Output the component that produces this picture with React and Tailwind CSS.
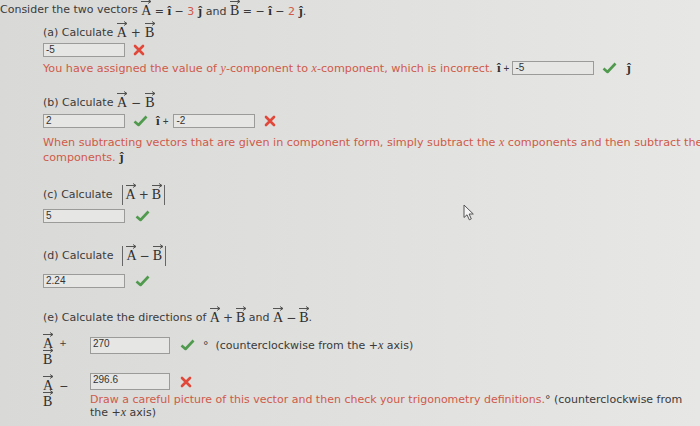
import React from 'react';

const Arrow = () => (
  <svg className="absolute left-[0px] top-[-5px]" width="11" height="5" viewBox="0 0 11 5">
    <path d="M0 2.5 H9.5 M7 0.5 L10 2.5 L7 4.5" stroke="#444" strokeWidth="0.9" fill="none" />
  </svg>
);

const V = ({ c }) => (
  <span className="relative inline-block font-['Liberation_Serif'] text-[14px] leading-none text-[#2e2e2e]">
    {c}
    <Arrow />
  </span>
);

const Hat = ({ c }) => (
  <span className="font-['Liberation_Serif'] font-bold text-[13px] text-[#2e2e2e]">{c}</span>
);

const Check = () => (
  <svg width="15" height="12" viewBox="0 0 15 12" className="shrink-0">
    <path d="M1.5 6.5 L5.5 10 L13.5 1.5" stroke="#4f9a4d" strokeWidth="2.6" fill="none" strokeLinejoin="round" />
  </svg>
);

const Cross = () => (
  <svg width="12" height="12" viewBox="0 0 12 12" className="shrink-0">
    <path d="M2 2 L10 10 M10 2 L2 10" stroke="#e2483a" strokeWidth="2.6" fill="none" strokeLinecap="round" />
  </svg>
);

const Box = ({ v, w = 'w-[82px] h-[14px]' }) => (
  <div className={`${w} border border-[#9b9b99] bg-[#e6e6e4] font-['Liberation_Sans'] text-[10px] leading-[12px] pl-[2px] text-[#333] shrink-0`}>
    {v}
  </div>
);

const Abs = ({ a, op, b }) => (
  <span className="inline-flex items-center h-[20px] border-l border-r border-[#666] px-[3px] ml-[9px]">
    <V c={a} />
    <span className="mx-[3px] text-[12px]">{op}</span>
    <V c={b} />
  </span>
);

export default function App() {
  return (
    <div className="w-[700px] h-[426px] overflow-hidden relative bg-gradient-to-r from-[#d9d9d7] to-[#e7e7e5] text-[#3a3a3a] font-['DejaVu_Sans'] text-[11px]">
      <div className="h-[20px] flex items-center whitespace-nowrap pt-[1px]">
        <span>Consider the two vectors&nbsp;</span>
        <V c="A" />
        <span>&nbsp;= <Hat c="î" /> − <span className="text-[#cf5a4a]">3</span> <Hat c="ĵ" /> and&nbsp;</span>
        <V c="B" />
        <span>&nbsp;= − <Hat c="î" /> − <span className="text-[#cf5a4a]">2</span> <Hat c="ĵ" />.</span>
      </div>

      <div className="pl-[43px]">
        {/* (a) */}
        <div className="mt-[5px] h-[16px] flex items-center whitespace-nowrap">
          <span>(a) Calculate&nbsp;</span>
          <V c="A" />
          <span className="mx-[4px] text-[12px]">+</span>
          <V c="B" />
        </div>
        <div className="mt-[2px] h-[14px] flex items-center gap-[8px]">
          <Box v="-5" />
          <Cross />
        </div>
        <div className="mt-[4px] h-[14px] flex items-center whitespace-nowrap">
          <span className="text-[#cf5a4a] text-[11.2px]">
            You have assigned the value of <i className="font-['Liberation_Serif'] text-[12px]">y</i>-component to <i className="font-['Liberation_Serif'] text-[12px]">x</i>-component, which is incorrect.
          </span>
          <span className="ml-[4px]"><Hat c="î" /></span>
          <span className="mx-[3px] font-['Liberation_Sans'] text-[10px]">+</span>
          <Box v="-5" />
          <span className="ml-[8px]"><Check /></span>
          <span className="ml-[9px]"><Hat c="ĵ" /></span>
        </div>

        {/* (b) */}
        <div className="mt-[20px] h-[16px] flex items-center whitespace-nowrap">
          <span>(b) Calculate&nbsp;</span>
          <V c="A" />
          <span className="mx-[4px] text-[12px]">−</span>
          <V c="B" />
        </div>
        <div className="mt-[3px] h-[14px] flex items-center whitespace-nowrap">
          <Box v="2" />
          <span className="ml-[8px]"><Check /></span>
          <span className="ml-[8px]"><Hat c="î" /></span>
          <span className="ml-[3px] mr-[5px] font-['Liberation_Sans'] text-[10px]">+</span>
          <Box v="-2" />
          <span className="ml-[9px]"><Cross /></span>
        </div>
        <div className="mt-[7px] text-[#cf5a4a] text-[11.2px] leading-[14px] whitespace-nowrap">
          <div>When subtracting vectors that are given in component form, simply subtract the <i className="font-['Liberation_Serif'] text-[12px]">x</i> components and then subtract the <i className="font-['Liberation_Serif'] text-[12px]">y</i></div>
          <div>components. <Hat c="ĵ" /></div>
        </div>

        {/* (c) */}
        <div className="mt-[20px] h-[20px] flex items-center whitespace-nowrap">
          <span>(c) Calculate</span>
          <Abs a="A" op="+" b="B" />
        </div>
        <div className="mt-[4px] h-[14px] flex items-center gap-[10px]">
          <Box v="5" />
          <Check />
        </div>

        {/* (d) */}
        <div className="mt-[23px] h-[20px] flex items-center whitespace-nowrap">
          <span>(d) Calculate</span>
          <Abs a="A" op="−" b="B" />
        </div>
        <div className="mt-[8px] h-[14px] flex items-center gap-[10px]">
          <Box v="2.24" />
          <Check />
        </div>

        {/* (e) */}
        <div className="mt-[22px] h-[16px] flex items-center whitespace-nowrap">
          <span>(e) Calculate the directions of&nbsp;</span>
          <V c="A" />
          <span className="mx-[3px] text-[12px]">+</span>
          <V c="B" />
          <span>&nbsp;and&nbsp;</span>
          <V c="A" />
          <span className="mx-[3px] text-[12px]">−</span>
          <V c="B" />
          <span>.</span>
        </div>

        <div className="mt-[8px] flex whitespace-nowrap">
          <div className="w-[47px] flex flex-col leading-[12px] pt-[3px]">
            <div><V c="A" /><span className="ml-[6px] text-[9px] align-top">+</span></div>
            <div className="mt-[2px]"><V c="B" /></div>
          </div>
          <div className="flex items-center h-[20px] mt-[1px]">
            <Box v="270" w="w-[80px] h-[17px]" />
            <span className="ml-[10px]"><Check /></span>
            <span className="ml-[8px]">°&nbsp; (counterclockwise from the +<i className="font-['Liberation_Serif'] text-[12px]">x</i> axis)</span>
          </div>
        </div>

        <div className="mt-[6px] flex whitespace-nowrap">
          <div className="w-[47px] flex flex-col leading-[12px] pt-[6px]">
            <div><V c="A" /><span className="ml-[6px] text-[11px]">−</span></div>
            <div className="mt-[2px]"><V c="B" /></div>
          </div>
          <div className="flex flex-col">
            <div className="flex items-center h-[17px]">
              <Box v="296.6" w="w-[80px] h-[17px]" />
              <span className="ml-[10px]"><Cross /></span>
            </div>
            <div className="mt-[3px] leading-[13px]">
              <div>
                <span className="text-[#cf5a4a]">Draw a careful picture of this vector and then check your trigonometry definitions.</span>° (counterclockwise from
              </div>
              <div>the +<i className="font-['Liberation_Serif'] text-[12px]">x</i> axis)</div>
            </div>
          </div>
        </div>
      </div>

      <svg className="absolute left-[463px] top-[204px]" width="12" height="17" viewBox="0 0 12 17">
        <path d="M1 1 L1 13.5 L4 10.8 L6.3 15.8 L8.3 14.9 L6.1 10 L10.3 10 Z" fill="#f4f4f4" stroke="#555" strokeWidth="1" />
      </svg>
    </div>
  );
}
